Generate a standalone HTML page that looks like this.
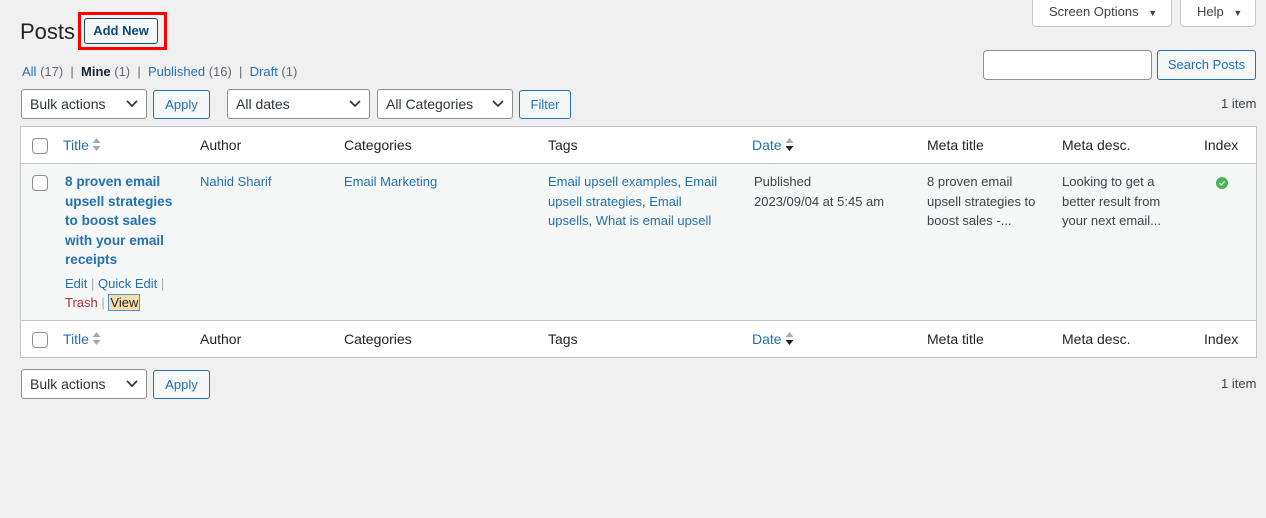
<!DOCTYPE html>
<html><head><style>
*{box-sizing:border-box;margin:0;padding:0}
body{width:1266px;height:518px;background:#f0f0f1;font-family:"Liberation Sans",sans-serif;font-size:13px;color:#3c434a;position:relative;overflow:hidden}
.a{position:absolute;white-space:nowrap}
a,.l{color:#2271b1;text-decoration:none}
.btn{position:absolute;border:1px solid #2271b1;color:#2271b1;background:#f6f7f7;border-radius:3px;text-align:center;font-size:13px}
.sel{position:absolute;border:1px solid #8c8f94;background:#fff;border-radius:3px;color:#2c3338;font-size:14px;padding-left:8px}
.sel svg{position:absolute;right:8px;top:10px}
.cb{position:absolute;width:16px;height:16px;border:1px solid #8c8f94;border-radius:4px;background:#fff}
.h{font-size:14px;color:#1d2327}
.lh{line-height:19.5px}
.srt{display:inline-block;vertical-align:-2px;margin-left:3px}
</style></head><body>
<div class="a" style="left:1032px;top:0;width:140px;height:27px;background:#fff;border:1px solid #c3c4c7;border-top:none;border-radius:0 0 4px 4px;font-size:13px;color:#3c434a;padding:4px 0 0 16px">Screen Options <span style="font-size:9px;margin-left:6px">▼</span></div>
<div class="a" style="left:1180px;top:0;width:76px;height:27px;background:#fff;border:1px solid #c3c4c7;border-top:none;border-radius:0 0 4px 4px;font-size:13px;color:#3c434a;padding:4px 0 0 16px">Help <span style="font-size:9px;margin-left:6px">▼</span></div>

<div class="a" style="left:20px;top:19px;font-size:22px;color:#1d2327">Posts</div>
<div class="a" style="left:78px;top:12px;width:89px;height:38px;border:3px solid #f00"></div>
<div class="a" style="left:84px;top:18px;width:74px;height:26px;border:1px solid #0a4b78;border-radius:3px;background:#f6f7f7;color:#0a4b78;font-weight:bold;font-size:13px;text-align:center;line-height:24px">Add New</div>

<div class="a" style="left:22px;top:64px;color:#646970"><a>All</a> (17) &nbsp;| &nbsp;<b style="color:#1d2327">Mine</b> (1) &nbsp;| &nbsp;<a>Published</a> (16) &nbsp;| &nbsp;<a>Draft</a> (1)</div>

<div class="a" style="left:983px;top:50px;width:169px;height:30px;background:#fff;border:1px solid #8c8f94;border-radius:4px"></div>
<div class="btn" style="left:1157px;top:50px;width:99px;height:30px;line-height:28px">Search Posts</div>

<div class="sel" style="left:21px;top:89px;width:126px;height:30px;line-height:28px">Bulk actions<svg width="12" height="8"><path d="M1 1l5 5 5-5" stroke="#2c3338" stroke-width="1.6" fill="none"/></svg></div>
<div class="btn" style="left:153px;top:90px;width:57px;height:29px;line-height:27px">Apply</div>
<div class="sel" style="left:227px;top:89px;width:143px;height:30px;line-height:28px">All dates<svg width="12" height="8"><path d="M1 1l5 5 5-5" stroke="#2c3338" stroke-width="1.6" fill="none"/></svg></div>
<div class="sel" style="left:377px;top:89px;width:136px;height:30px;line-height:28px">All Categories<svg width="12" height="8"><path d="M1 1l5 5 5-5" stroke="#2c3338" stroke-width="1.6" fill="none"/></svg></div>
<div class="btn" style="left:519px;top:90px;width:52px;height:29px;line-height:27px">Filter</div>
<div class="a" style="left:1221px;top:96px">1 item</div>

<div class="a" style="left:20px;top:126px;width:1237px;height:232px;border:1px solid #c3c4c7;background:#fff"></div>
<div class="a" style="left:21px;top:163px;width:1235px;height:158px;background:#f6f7f7;border-top:1px solid #c3c4c7;border-bottom:1px solid #c3c4c7"></div>

<div class="cb" style="left:32px;top:138px"></div>
<div class="a h" style="left:63px;top:137px"><a>Title</a><svg class="srt" width="9" height="15"><path d="M0.5 6L4.5 1 8.5 6z M0.5 9L4.5 14 8.5 9z" fill="#a7aaad"/></svg></div>
<div class="a h" style="left:200px;top:137px">Author</div>
<div class="a h" style="left:344px;top:137px">Categories</div>
<div class="a h" style="left:548px;top:137px">Tags</div>
<div class="a h" style="left:752px;top:137px"><a>Date</a><svg class="srt" width="9" height="15"><path d="M0.5 6L4.5 1 8.5 6z" fill="#a7aaad"/><path d="M0.5 9L4.5 14 8.5 9z" fill="#1d2327"/></svg></div>
<div class="a h" style="left:927px;top:137px">Meta title</div>
<div class="a h" style="left:1062px;top:137px">Meta desc.</div>
<div class="a h" style="left:1204px;top:137px">Index</div>

<div class="cb" style="left:32px;top:175px"></div>
<div class="a lh" style="left:65px;top:172px;font-weight:bold;font-size:13.6px;color:#2271b1">8 proven email<br>upsell strategies<br>to boost sales<br>with your email<br>receipts</div>
<div class="a" style="left:65px;top:274px;line-height:19px"><a>Edit</a> <span style="color:#a7aaad">|</span> <a>Quick Edit</a> <span style="color:#a7aaad">|</span><br><span style="color:#b32d2e">Trash</span> <span style="color:#a7aaad">|</span> <span style="background:#f8dfa5;border:1px solid #4f94d4;color:#1d2327;padding:0 1px">View</span></div>
<div class="a" style="left:200px;top:174px"><a>Nahid Sharif</a></div>
<div class="a" style="left:344px;top:174px"><a>Email Marketing</a></div>
<div class="a lh" style="left:548px;top:172px"><a>Email upsell examples</a>, <a>Email</a><br><a>upsell strategies</a>, <a>Email</a><br><a>upsells</a>, <a>What is email upsell</a></div>
<div class="a lh" style="left:754px;top:172px">Published<br>2023/09/04 at 5:45 am</div>
<div class="a lh" style="left:927px;top:172px">8 proven email<br>upsell strategies to<br>boost sales -...</div>
<div class="a lh" style="left:1062px;top:172px">Looking to get a<br>better result from<br>your next email...</div>
<div class="a" style="left:1216px;top:177px;width:12px;height:12px;border-radius:50%;background:#46b450"><svg width="12" height="12" style="position:absolute;left:0;top:0"><path d="M3.5 6.2l1.8 1.7 3.3-3.5" stroke="#fff" stroke-width="1.3" fill="none"/></svg></div>

<div class="cb" style="left:32px;top:332px"></div>
<div class="a h" style="left:63px;top:331px"><a>Title</a><svg class="srt" width="9" height="15"><path d="M0.5 6L4.5 1 8.5 6z M0.5 9L4.5 14 8.5 9z" fill="#a7aaad"/></svg></div>
<div class="a h" style="left:200px;top:331px">Author</div>
<div class="a h" style="left:344px;top:331px">Categories</div>
<div class="a h" style="left:548px;top:331px">Tags</div>
<div class="a h" style="left:752px;top:331px"><a>Date</a><svg class="srt" width="9" height="15"><path d="M0.5 6L4.5 1 8.5 6z" fill="#a7aaad"/><path d="M0.5 9L4.5 14 8.5 9z" fill="#1d2327"/></svg></div>
<div class="a h" style="left:927px;top:331px">Meta title</div>
<div class="a h" style="left:1062px;top:331px">Meta desc.</div>
<div class="a h" style="left:1204px;top:331px">Index</div>

<div class="sel" style="left:21px;top:369px;width:126px;height:30px;line-height:28px">Bulk actions<svg width="12" height="8"><path d="M1 1l5 5 5-5" stroke="#2c3338" stroke-width="1.6" fill="none"/></svg></div>
<div class="btn" style="left:153px;top:370px;width:57px;height:29px;line-height:27px">Apply</div>
<div class="a" style="left:1221px;top:376px">1 item</div>
</body></html>
